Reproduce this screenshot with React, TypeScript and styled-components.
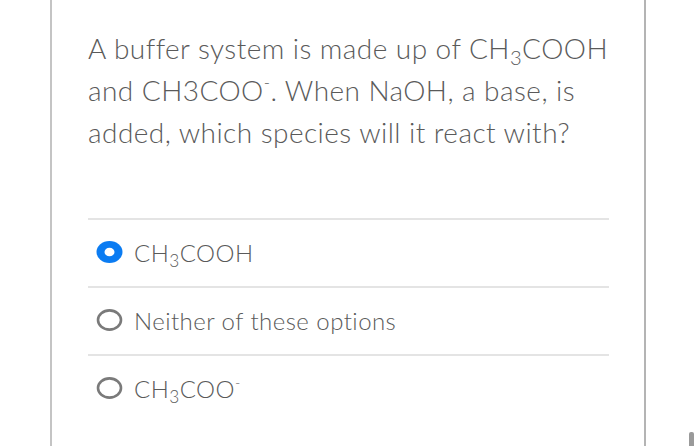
import React from "react";
import styled, { createGlobalStyle } from "styled-components";

const Global = createGlobalStyle`
  html, body { margin: 0; padding: 0; background: #ffffff; }
  body { font-family: "Lato", "Noto Sans", sans-serif; overflow: hidden; }
`;

const Page = styled.div`
  width: 700px;
  height: 446px;
  position: relative;
  overflow: hidden;
`;

const Card = styled.div`
  margin-left: 50px;
  width: 596px;
  height: 446px;
  border-left: 2px solid #c4c4c4;
  border-right: 2px solid #b4b4b4;
  padding: 27px 35px 0 36px;
  box-sizing: border-box;
`;

const Question = styled.div`
  font-size: 28px;
  font-weight: 300;
  line-height: 42px;
  color: #5a5a5a;
  letter-spacing: 0.45px;
  margin-bottom: 65px;
`;

const Sub = styled.sub`
  font-size: 0.72em;
  vertical-align: -0.28em;
  line-height: 0;
`;

const Sup = styled.sup`
  font-size: 0.6em;
  vertical-align: 0.7em;
  line-height: 0;
`;

const List = styled.div`
  display: flex;
  flex-direction: column;
`;

const Option = styled.div`
  display: flex;
  align-items: center;
  gap: 11px;
  height: 68px;
  border-top: 2px solid #e4e4e4;
  box-sizing: border-box;
  padding-left: 8px;
  padding-bottom: 2px;
`;

const Label = styled.span`
  font-size: 24px;
  font-weight: 300;
  color: #5a5a5a;
  letter-spacing: 0.45px;
`;

const Scroll = styled.div`
  position: absolute;
  left: 689px;
  top: 432px;
  width: 5px;
  height: 14px;
  background: #9a9a9a;
  border-radius: 2px 2px 0 0;
`;

function Radio({ checked }: { checked?: boolean }) {
  return (
    <svg width="27" height="22" viewBox="0 0 27 22">
      {checked ? (
        <>
          <ellipse cx="13.5" cy="11" rx="13" ry="11" fill="#0b7cf2" />
          <ellipse cx="13.5" cy="11" rx="5" ry="4.3" fill="#ffffff" />
        </>
      ) : (
        <ellipse cx="13.5" cy="11" rx="11.5" ry="9.6" fill="none" stroke="#7a7a7a" strokeWidth="2.6" />
      )}
    </svg>
  );
}

export default function App() {
  return (
    <Page>
      <Global />
      <Card>
        <Question>
          A buffer system is made up of CH<Sub>3</Sub>COOH and CH3COO<Sup>-</Sup>. When NaOH, a base, is
          added, which species will it react with?
        </Question>
        <List>
          <Option>
            <Radio checked />
            <Label>
              CH<Sub>3</Sub>COOH
            </Label>
          </Option>
          <Option>
            <Radio />
            <Label>Neither of these options</Label>
          </Option>
          <Option>
            <Radio />
            <Label>
              CH<Sub>3</Sub>COO<Sup>-</Sup>
            </Label>
          </Option>
        </List>
      </Card>
      <Scroll />
    </Page>
  );
}
